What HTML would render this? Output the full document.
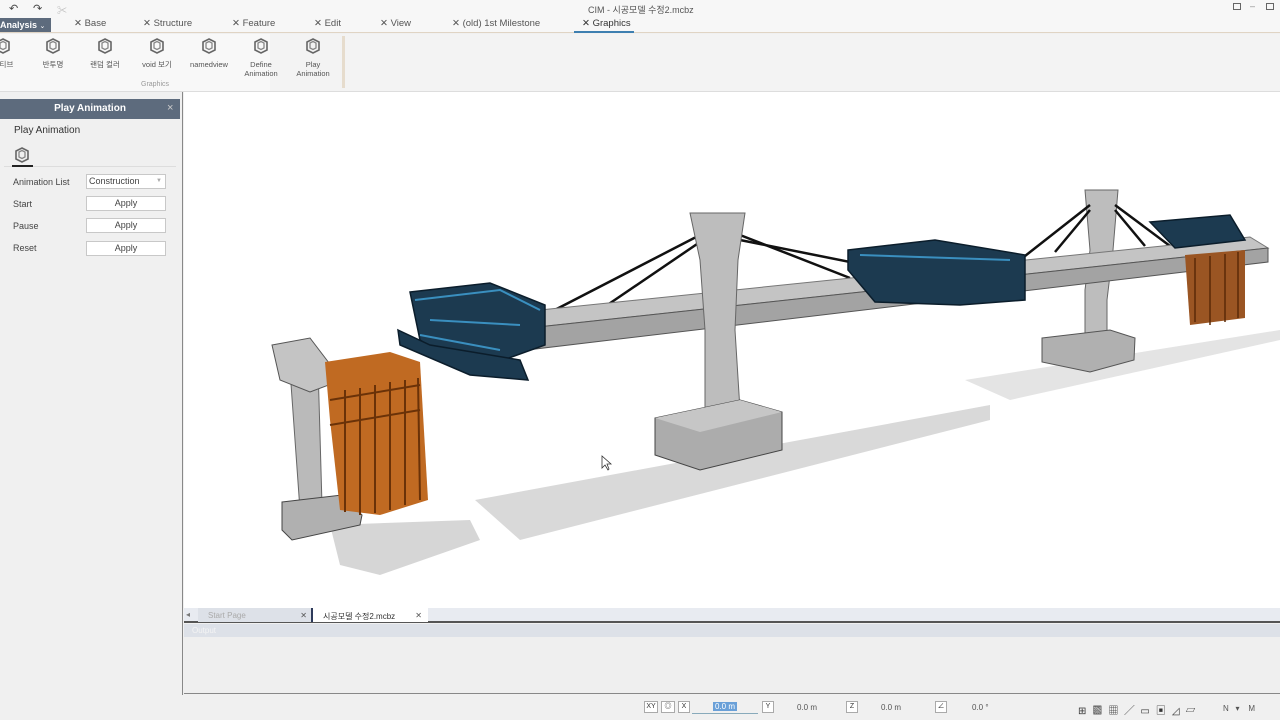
<!DOCTYPE html>
<html><head><meta charset="utf-8"><style>
*{box-sizing:border-box;margin:0;padding:0}
body{width:1280px;height:720px;overflow:hidden;background:#f0f0f0;font-family:"Liberation Sans","Noto Sans CJK KR",sans-serif;font-size:9px;color:#333;position:relative}
.abs{position:absolute}
.tab{position:absolute;top:18px;font-size:9.5px;color:#555}
.rb{position:absolute;top:38px;width:46px;text-align:center;font-size:7.5px;color:#555;line-height:9px}
.rb svg{display:block;margin:0 auto 4px}
.lbl{position:absolute;left:13px;font-size:9px;color:#444}
.btn{position:absolute;left:86px;width:80px;height:15px;border:1px solid #c8c8c8;background:#fff;text-align:center;font-size:9px;line-height:13px;color:#444}
</style></head><body>
<div class="abs" style="left:0;top:0;width:1280px;height:17px;background:#f7f7f7"></div>
<div class="abs" style="left:9px;top:2px;font-size:11px;color:#444">↶</div>
<div class="abs" style="left:33px;top:2px;font-size:11px;color:#444">↷</div>
<div class="abs" style="left:57px;top:2px;font-size:10px;color:#bbb">✂</div>
<div class="abs" style="left:588px;top:3px;font-size:9px;color:#555">CIM - 시공모델 수정2.mcbz</div>
<div class="abs" style="left:1233px;top:3px;width:8px;height:7px;border:1px solid #666"></div>
<div class="abs" style="left:1250px;top:1px;color:#888">–</div>
<div class="abs" style="left:1266px;top:3px;width:8px;height:7px;border:1px solid #666"></div>
<div class="abs" style="left:1189px;top:18px;width:91px;height:13px;border:1px solid #ccc;background:#fff;font-size:7px;color:#aaa;padding:2px 0 0 7px">Quick Access</div>
<div class="abs" style="left:0;top:17px;width:1280px;height:16px;background:#f7f7f7;border-bottom:1px solid #e0d4c4"></div>
<div class="abs" style="left:0;top:18px;width:51px;height:14px;background:#5d6b7d;color:#fff;font-size:9px;font-weight:bold;padding:2px 0 0 0">Analysis <span style="font-weight:normal;font-size:7px">⌄</span></div>
<div class="tab" style="left:74px">✕ Base</div>
<div class="tab" style="left:143px">✕ Structure</div>
<div class="tab" style="left:232px">✕ Feature</div>
<div class="tab" style="left:314px">✕ Edit</div>
<div class="tab" style="left:380px">✕ View</div>
<div class="tab" style="left:452px">✕ (old) 1st Milestone</div>
<div class="tab" style="left:582px;color:#333">✕ Graphics</div>
<div class="abs" style="left:574px;top:31px;width:60px;height:2px;background:#3e7fb0"></div>
<div class="abs" style="left:0;top:34px;width:1280px;height:58px;background:#f3f3f3;border-bottom:1px solid #ddd"></div>
<div class="abs" style="left:0;top:34px;width:270px;height:57px;background:#f8f8f8"></div>
<div class="abs" style="left:342px;top:36px;width:3px;height:52px;background:#e6dccd"></div>
<svg width="0" height="0" style="position:absolute"><defs><g id="ic"><path d="M8 1 L14 4 L14 12 L8 15 L2 12 L2 4 Z" fill="none" stroke="#666" stroke-width="1.6"/><path d="M5 5 L8 3.5 L11 5 L11 10 L8 11.5 L5 10 Z" fill="none" stroke="#888" stroke-width="1.3"/></g></defs></svg>
<div class="rb" style="left:-20px"><svg width="16" height="18"><use href="#ic"/></svg>렉티브</div>
<div class="rb" style="left:30px"><svg width="16" height="18"><use href="#ic"/></svg>반투명</div>
<div class="rb" style="left:82px"><svg width="16" height="18"><use href="#ic"/></svg>랜덤 컬러</div>
<div class="rb" style="left:134px"><svg width="16" height="18"><use href="#ic"/></svg>void 보기</div>
<div class="rb" style="left:186px"><svg width="16" height="18"><use href="#ic"/></svg>namedview</div>
<div class="rb" style="left:238px"><svg width="16" height="18"><use href="#ic"/></svg>Define<br>Animation</div>
<div class="rb" style="left:290px"><svg width="16" height="18"><use href="#ic"/></svg>Play<br>Animation</div>
<div class="abs" style="left:141px;top:81px;font-size:7px;color:#999">Graphics</div>
<div class="abs" style="left:0;top:92px;width:183px;height:603px;background:#f0f0f0;border-right:1px solid #888"></div>
<div class="abs" style="left:0;top:99px;width:180px;height:20px;background:#5d6b7d;color:#fff;font-weight:bold;font-size:10px;text-align:center;line-height:19px">Play Animation</div>
<div class="abs" style="left:167px;top:102px;color:#ccc;font-size:11px">×</div>
<div class="abs" style="left:14px;top:125px;font-size:10px;color:#333">Play Animation</div>
<svg class="abs" style="left:14px;top:147px" width="16" height="18"><use href="#ic"/></svg>
<div class="abs" style="left:4px;top:166px;width:172px;height:1px;background:#ddd"></div>
<div class="abs" style="left:12px;top:165px;width:21px;height:2px;background:#222"></div>
<div class="lbl" style="top:177px">Animation List</div>
<div class="btn" style="top:174px;text-align:left;padding-left:2px">Construction<span style="float:right;color:#aaa;font-size:6px;margin-right:3px">▼</span></div>
<div class="lbl" style="top:199px">Start</div><div class="btn" style="top:196px">Apply</div>
<div class="lbl" style="top:221px">Pause</div><div class="btn" style="top:218px">Apply</div>
<div class="lbl" style="top:243px">Reset</div><div class="btn" style="top:241px">Apply</div>
<div class="abs" style="left:184px;top:92px;width:1096px;height:516px;background:#fff"></div>
<svg class="abs" style="left:0;top:0" width="1280" height="610">
<polygon points="475,500 990,405 990,420 520,540" fill="#d9d9d9"/>
<polygon points="330,525 470,520 480,540 380,575 340,565" fill="#d6d6d6"/>
<polygon points="965,380 1280,330 1280,340 1010,400" fill="#e4e4e4"/>
<polygon points="1085,190 1118,190 1113,250 1107,300 1107,340 1085,340 1085,290 1090,250" fill="#bdbdbd" stroke="#666" stroke-width="1"/>
<polygon points="1042,338 1110,330 1135,338 1134,360 1090,372 1042,362" fill="#b0b0b0" stroke="#555" stroke-width="1"/>
<g stroke="#111" stroke-width="2.5">
<line x1="700" y1="235" x2="545" y2="315"/><line x1="700" y1="242" x2="600" y2="310"/>
<line x1="740" y1="235" x2="850" y2="278"/><line x1="740" y1="240" x2="900" y2="272"/>
<line x1="1090" y1="205" x2="1025" y2="256"/><line x1="1090" y1="210" x2="1055" y2="252"/>
<line x1="1115" y1="205" x2="1170" y2="246"/><line x1="1115" y1="210" x2="1145" y2="246"/>
</g>
<polygon points="540,310 1250,237 1268,248 510,330" fill="#c4c4c4" stroke="#777"/>
<polygon points="510,330 1268,248 1268,262 510,352" fill="#a3a3a3" stroke="#555"/>
<polygon points="690,213 745,213 738,260 735,330 740,410 705,415 705,330 700,260" fill="#bdbdbd" stroke="#666"/>
<polygon points="655,418 740,400 782,412 782,450 700,470 655,455" fill="#acacac" stroke="#444"/>
<polygon points="655,418 740,400 782,412 700,432" fill="#c6c6c6"/>
<polygon points="290,370 318,365 322,505 300,510" fill="#bababa" stroke="#666"/>
<polygon points="272,345 310,338 342,380 310,392 280,380" fill="#c4c4c4" stroke="#555"/>
<polygon points="282,502 342,495 362,515 360,525 292,540 282,530" fill="#b0b0b0" stroke="#444"/>
<polygon points="325,362 390,352 420,362 428,500 380,515 340,510 330,420" fill="#c06a22"/>
<g stroke="#6a3208" stroke-width="2">
<line x1="345" y1="390" x2="345" y2="512"/><line x1="360" y1="388" x2="360" y2="515"/><line x1="375" y1="385" x2="375" y2="513"/>
<line x1="390" y1="382" x2="390" y2="510"/><line x1="405" y1="380" x2="405" y2="505"/><line x1="418" y1="378" x2="420" y2="500"/>
<line x1="330" y1="400" x2="420" y2="385"/><line x1="330" y1="425" x2="420" y2="410"/>
</g>
<g fill="#1c3a50" stroke="#0b1d2b" stroke-width="1.5">
<polygon points="410,292 490,283 545,305 545,345 470,372 420,340"/>
<polygon points="398,330 430,345 520,360 528,380 470,375 400,345"/>
<polygon points="848,250 935,240 1025,255 1025,300 960,305 875,302 848,270"/>
<polygon points="1150,222 1230,215 1245,240 1175,248"/>
</g>
<g stroke="#3a8fbf" stroke-width="2" fill="none">
<path d="M415 300 L500 290 L540 310 M430 320 L520 325 M860 255 L1010 260 M420 335 L500 350"/>
</g>
<polygon points="1185,255 1245,250 1245,318 1190,325" fill="#9a5523"/>
<g stroke="#5a2a08" stroke-width="1.5"><line x1="1195" y1="258" x2="1195" y2="322"/><line x1="1210" y1="256" x2="1210" y2="325"/><line x1="1225" y1="254" x2="1225" y2="322"/><line x1="1238" y1="252" x2="1238" y2="318"/></g>
<path d="M602 456 L602 468 L605 465 L608 470 L609 469 L607 464 L611 464 Z" fill="#fff" stroke="#333" stroke-width="0.8"/>
</svg>
<div class="abs" style="left:184px;top:608px;width:1096px;height:15px;background:#e8ebf1;border-bottom:2px solid #555"></div>
<div class="abs" style="left:186px;top:610px;font-size:8px;color:#777">◂</div>
<div class="abs" style="left:198px;top:608px;width:113px;height:14px;background:#dde1e8;font-size:8px;color:#aaa;padding:3px 0 0 10px">Start Page<span style="position:absolute;right:4px;color:#555">✕</span></div>
<div class="abs" style="left:311px;top:608px;width:2px;height:14px;background:#2d3a5a"></div>
<div class="abs" style="left:313px;top:608px;width:115px;height:14px;background:#fff;font-size:8px;color:#333;padding:3px 0 0 10px">시공모델 수정2.mcbz<span style="position:absolute;right:6px;color:#555">✕</span></div>
<div class="abs" style="left:184px;top:624px;width:1096px;height:13px;background:#dde1e8;font-size:8px;color:#f4f4f4;padding:2px 0 0 8px">Output</div>
<div class="abs" style="left:184px;top:637px;width:1096px;height:57px;background:#efefef;border-bottom:1px solid #888"></div>
<div class="abs" style="left:0;top:695px;width:1280px;height:25px;background:#f0f0f0"></div>
<div class="abs" style="left:644px;top:701px;width:14px;height:12px;border:1px solid #aaa;font-size:7px;line-height:10px;text-align:center;background:#fff">XY</div>
<div class="abs" style="left:661px;top:701px;width:14px;height:12px;border:1px solid #aaa;font-size:7px;line-height:10px;text-align:center;background:#fff">◎</div>
<div class="abs" style="left:678px;top:701px;width:12px;height:12px;border:1px solid #aaa;font-size:7px;line-height:10px;text-align:center;background:#fff">X</div>
<div class="abs" style="left:692px;top:713px;width:66px;height:1px;background:#8ab"></div>
<div class="abs" style="left:713px;top:702px;font-size:8px;color:#fff;background:#6aa0d8;padding:0 2px">0.0 m</div>
<div class="abs" style="left:762px;top:701px;width:12px;height:12px;border:1px solid #aaa;font-size:7px;line-height:10px;text-align:center;background:#fff">Y</div>
<div class="abs" style="left:797px;top:703px;font-size:8px;color:#555">0.0 m</div>
<div class="abs" style="left:846px;top:701px;width:12px;height:12px;border:1px solid #aaa;font-size:7px;line-height:10px;text-align:center;background:#fff">Z</div>
<div class="abs" style="left:881px;top:703px;font-size:8px;color:#555">0.0 m</div>
<div class="abs" style="left:935px;top:701px;width:12px;height:12px;border:1px solid #aaa;font-size:7px;line-height:10px;text-align:center;background:#fff">∠</div>
<div class="abs" style="left:972px;top:703px;font-size:8px;color:#555">0.0 °</div>
<div class="abs" style="left:1078px;top:702px;font-size:10px;color:#333;letter-spacing:6px">⊞▩▦╱▭▣◿▱</div>
<div class="abs" style="left:1223px;top:704px;font-size:8px;color:#555">N&nbsp;&nbsp;&nbsp;▾&nbsp;&nbsp;&nbsp;&nbsp;M</div>
</body></html>
